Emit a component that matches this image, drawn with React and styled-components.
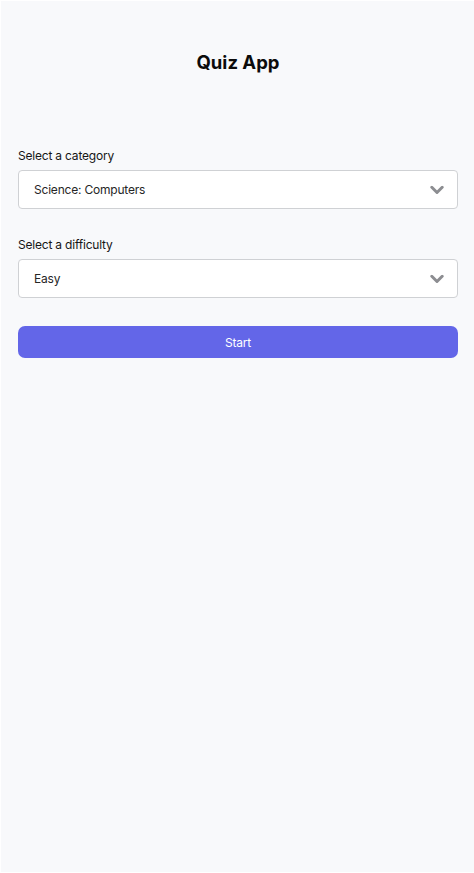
import React, { useState } from 'react'
import styled, { createGlobalStyle } from 'styled-components'

const GlobalStyle = createGlobalStyle`
  html, body {
    margin: 0;
    padding: 0;
    background: #ffffff;
  }
  body {
    font-family: Inter, "Noto Sans", sans-serif;
    color: #111111;
  }
`

const Page = styled.div`
  min-height: 871px;
  margin: 1px 0 1px 1px;
  background: #f8f9fb;
  padding: 0 16px 0 17px;
  box-sizing: border-box;
`

const Title = styled.h1`
  margin: 0;
  padding-top: 49px;
  font-size: 18.5px;
  font-weight: 700;
  text-align: center;
  line-height: 24px;
  color: #0b0b0b;
`

const Form = styled.div`
  margin-top: 74px;
  display: flex;
  flex-direction: column;
`

const Field = styled.div`
  display: flex;
  flex-direction: column;
  gap: 6px;
  margin-bottom: 28px;
`

const Label = styled.label`
  font-size: 12px;
  letter-spacing: -0.2px;
  line-height: 16px;
  color: #161616;
`

const SelectWrap = styled.div`
  position: relative;
`

const Select = styled.select`
  appearance: none;
  width: 100%;
  height: 39px;
  box-sizing: border-box;
  padding: 0 40px 0 15px;
  border: 1px solid #cfd1d4;
  border-radius: 4px;
  background: #ffffff;
  font-family: inherit;
  font-size: 12px;
  letter-spacing: -0.2px;
  color: #262626;
  outline: none;
`

const ChevronIcon = styled.svg`
  position: absolute;
  right: 14px;
  top: 50%;
  width: 14px;
  height: 9px;
  transform: translateY(-50%);
  pointer-events: none;
`

const Chevron = () => (
  <ChevronIcon viewBox="0 0 14 9">
    <polyline points="1.8,1.8 7,7 12.2,1.8" fill="none" stroke="#8c8d91" strokeWidth="3" strokeLinecap="round" strokeLinejoin="round" />
  </ChevronIcon>
)

const StartButton = styled.button`
  margin-top: 0;
  height: 32px;
  border: none;
  border-radius: 7px;
  background: #6366e8;
  color: #ffffff;
  font-family: inherit;
  font-size: 12px;
  letter-spacing: -0.2px;
  cursor: pointer;
`

const categories = ['General Knowledge', 'Science: Computers', 'Science & Nature', 'History']
const difficulties = ['Easy', 'Medium', 'Hard']

function App() {
  const [category, setCategory] = useState('Science: Computers')
  const [difficulty, setDifficulty] = useState('Easy')

  return (
    <Page>
      <GlobalStyle />
      <Title>Quiz App</Title>
      <Form>
        <Field>
          <Label>Select a category</Label>
          <SelectWrap>
            <Select value={category} onChange={e => setCategory(e.target.value)}>
              {categories.map(c => <option key={c}>{c}</option>)}
            </Select>
            <Chevron />
          </SelectWrap>
        </Field>
        <Field>
          <Label>Select a difficulty</Label>
          <SelectWrap>
            <Select value={difficulty} onChange={e => setDifficulty(e.target.value)}>
              {difficulties.map(d => <option key={d}>{d}</option>)}
            </Select>
            <Chevron />
          </SelectWrap>
        </Field>
        <StartButton>Start</StartButton>
      </Form>
    </Page>
  )
}

export default App
